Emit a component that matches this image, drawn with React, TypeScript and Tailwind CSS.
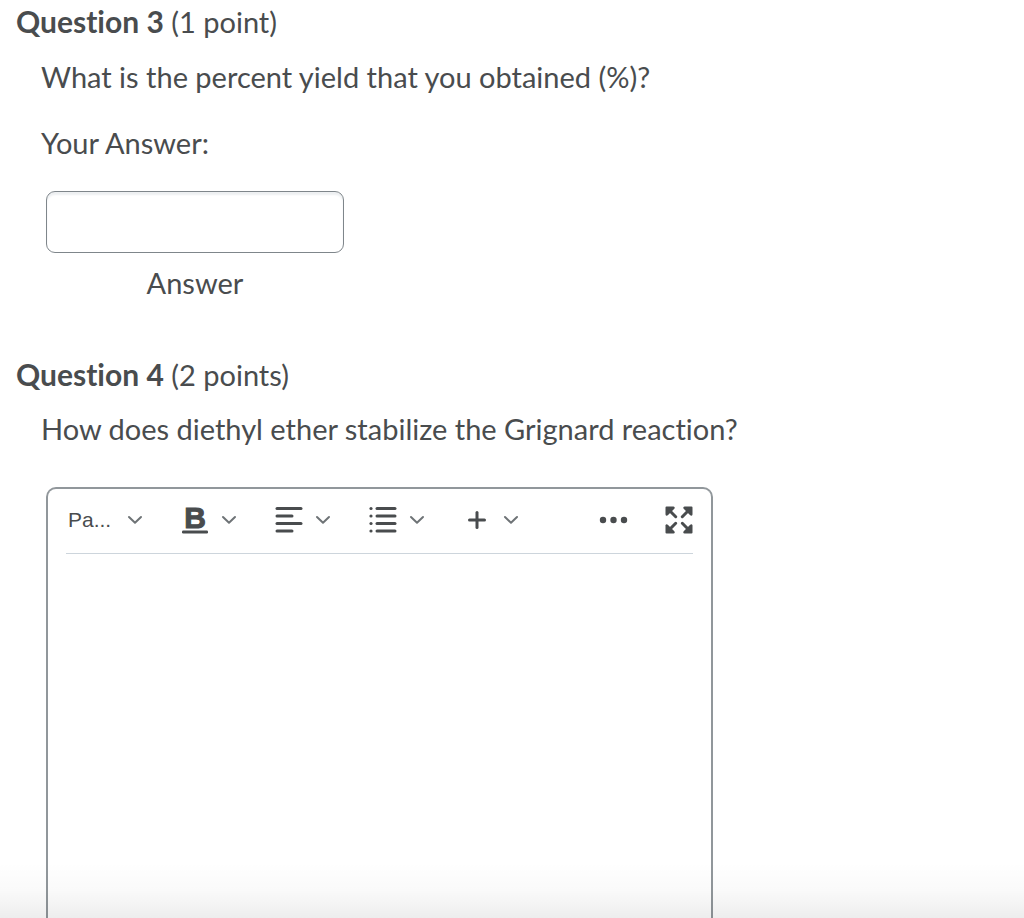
import type { ReactNode } from "react";

interface QuestionHeadingProps {
  number: number;
  points: string;
}

function QuestionHeading({ number, points }: QuestionHeadingProps) {
  return (
    <h2 className="leading-[42px]">
      <strong className="text-[30px] font-bold">Question {number}</strong> ({points})
    </h2>
  );
}

function Chevron() {
  return (
    <svg className="h-[10px] w-4 shrink-0" viewBox="0 0 16 10" fill="none" stroke="#6e7376" strokeWidth="2" strokeLinecap="round" strokeLinejoin="round">
      <path d="M2 2l6 5.800L14 2" />
    </svg>
  );
}

interface ToolButtonProps {
  label: string;
  menu?: boolean;
  children: ReactNode;
}

function ToolButton({ label, menu, children }: ToolButtonProps) {
  return (
    <button type="button" aria-label={label} className="flex shrink-0 items-center gap-3">
      <svg className="h-7 w-7 overflow-visible" viewBox="0 0 28 28" fill="#494c4e">
        {children}
      </svg>
      {menu && <Chevron />}
    </button>
  );
}

export default function App() {
  return (
    <div className="relative flex h-screen flex-col overflow-hidden bg-white px-4 font-['Lato',sans-serif] text-[29px] leading-[44px] text-[#494c4e] [font-variant-ligatures:none]">
      {/* Question 3 */}
      <section>
        <QuestionHeading number={3} points="1 point" />
        <div className="pl-[25px]">
          <p className="mt-3">What is the percent yield that you obtained (%)?</p>
          <p className="mt-[22px]">Your Answer:</p>
          <div className="mt-[26px] ml-[5px] flex w-[298px] flex-col items-center">
            <input
              id="answer"
              type="text"
              className="h-[62px] w-full rounded-[9px] border border-[#7f868b] bg-white px-6 shadow-[inset_0_3px_2px_#eef0f2] outline-none"
            />
            <label htmlFor="answer" className="mt-2">Answer</label>
          </div>
        </div>
      </section>

      {/* Question 4 */}
      <section className="mt-12 flex flex-1 flex-col">
        <QuestionHeading number={4} points="2 points" />
        <div className="flex flex-1 flex-col pl-[25px]">
          <p className="mt-[11px]" id="prompt">How does diethyl ether stabilize the Grignard reaction?</p>

          <div className="mt-9 ml-[5px] flex w-full max-w-[667px] flex-1 flex-col rounded-t-[10px] border-2 border-b-0 border-[#91979b] px-[18px]">
            {/* Toolbar */}
            <div className="flex h-[65px] items-center gap-[38px] border-b border-[#cdd5dc] pb-0.5">
              <div className="relative flex w-[77px] shrink-0 items-center">
                <select
                  aria-label="Format"
                  className="h-8 w-full appearance-none bg-transparent pl-0.5 font-['Liberation_Sans',Arial,sans-serif] text-[21px] leading-8 outline-none"
                >
                  <option>Pa...</option>
                </select>
                <span className="pointer-events-none absolute right-0">
                  <Chevron />
                </span>
              </div>

              <ToolButton label="Bold" menu>
                <text
                  x="14"
                  y="22"
                  textAnchor="middle"
                  stroke="#494c4e"
                  strokeWidth="1"
                  className="font-['Liberation_Sans',Arial,sans-serif] text-[30px] font-bold"
                >
                  B
                </text>
                <rect x="1" y="24.500" width="26" height="3" rx="1.200" />
              </ToolButton>
              <ToolButton label="Align" menu>
                <rect x="0.500" y="1" width="27" height="3" rx="1.500" />
                <rect x="0.500" y="8.500" width="18" height="3" rx="1.500" />
                <rect x="0.500" y="16" width="27" height="3" rx="1.500" />
                <rect x="0.500" y="23.500" width="18" height="3" rx="1.500" />
              </ToolButton>
              <ToolButton label="List" menu>
                {[1, 8.5, 16, 23.5].map((y) => (
                  <g key={y}>
                    <circle cx="2" cy={y + 1.5} r="1.6" />
                    <rect x="6.500" y={y} width="21" height="3" rx="1.500" />
                  </g>
                ))}
              </ToolButton>
              <ToolButton label="Insert" menu>
                <rect x="5" y="12.500" width="18" height="3" rx="1.500" />
                <rect x="12.500" y="5" width="3" height="18" rx="1.500" />
              </ToolButton>

              <div className="ml-auto flex gap-[38px]">
                <ToolButton label="More actions">
                  <circle cx="4" cy="14" r="3.200" />
                  <circle cx="14.500" cy="14" r="3.200" />
                  <circle cx="25" cy="14" r="3.200" />
                </ToolButton>
                <ToolButton label="Full screen">
                  {[0, 90, 180, 270].map((angle) => (
                    <g key={angle} transform={`rotate(${angle} 14 14)`}>
                      <path d="M1.500.5H8.500Q10.500 1 9.300 2.800L2.800 9.300Q1 10.500.5 8.500V1.500Q.5.500 1.500.5z" />
                      <path d="M4 4l6.700 6.700" stroke="#494c4e" strokeWidth="3" strokeLinecap="round" />
                    </g>
                  ))}
                </ToolButton>
              </div>
            </div>

            <textarea
              aria-labelledby="prompt"
              className="w-full flex-1 resize-none bg-transparent py-4 outline-none"
            />
          </div>
        </div>
      </section>

      {/* Fade at the bottom edge */}
      <div className="pointer-events-none absolute inset-x-0 bottom-0 h-14 bg-linear-to-b from-black/0 via-black/2 to-black/7" />
    </div>
  );
}
